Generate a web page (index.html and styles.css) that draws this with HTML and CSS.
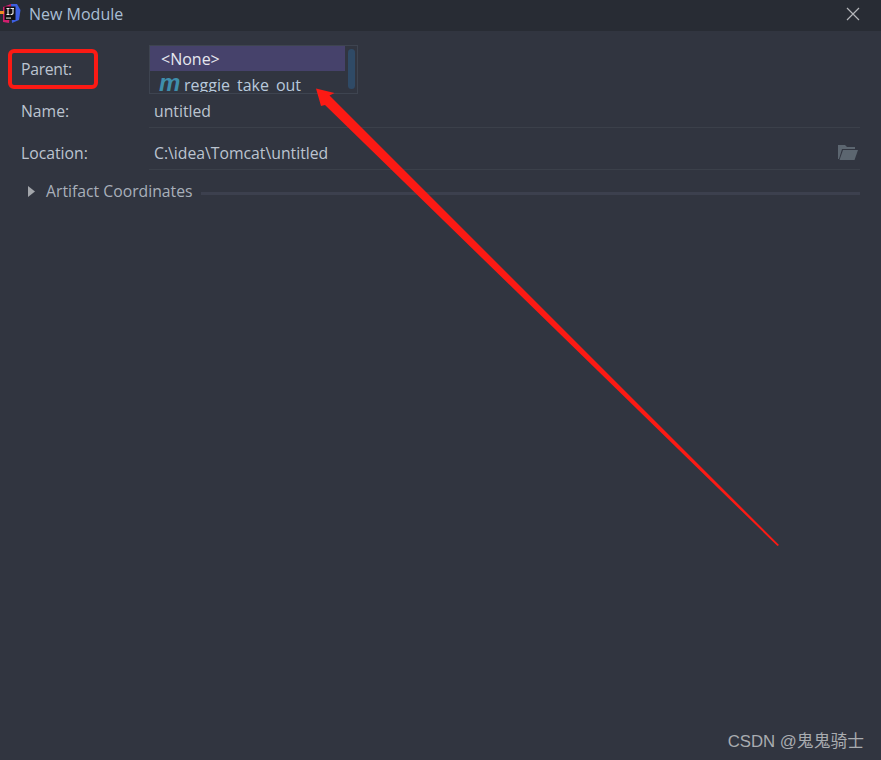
FILE: index.html
```html
<!DOCTYPE html>
<html lang="en">
<head>
<meta charset="utf-8">
<title>New Module</title>
<link rel="stylesheet" href="styles.css">
</head>
<body>
<div class="dialog">
  <header class="titlebar">
    <svg class="app-logo" width="22" height="24" viewBox="0 0 22 24">
      <path d="M11 2 L17 2 L20.5 8 L19 18 L12 21 Z" fill="#3d5fe0"/>
      <path d="M3 5 L11 2 L9 21 L3 20 Z" fill="#d01f6e"/>
      <path d="M0 9 L4 9 L4 12 L0 12 Z" fill="#f08a24"/>
      <rect x="4.5" y="4.5" width="11" height="13.5" fill="#111"/>
      <rect x="6" y="15.5" width="5" height="1.2" fill="#bbb"/>
      <path d="M6.5 6.5 H9.5 M8 6.5 V12.5 M6.5 12.5 H9.5 M10.5 6.5 H14 M13 6.5 V11 Q13 12.5 10.5 12.5" stroke="#eee" stroke-width="1.1" fill="none"/>
    </svg>
    <span class="title">New Module</span>
    <svg class="close" width="14" height="14" viewBox="0 0 14 14">
      <path d="M1 1 L13 13 M13 1 L1 13" stroke="#b4b6ba" stroke-width="1.2" fill="none"/>
    </svg>
  </header>
  <main class="form">
    <div class="row row-parent">
      <label class="label">Parent:</label>
      <div class="dropdown">
        <div class="list">
          <div class="item selected">&lt;None&gt;</div>
          <div class="item item-clipped"><span class="maven">m</span><span>reggie_take_out</span></div>
        </div>
        <div class="track"><div class="thumb"></div></div>
      </div>
    </div>
    <div class="row row-name">
      <label class="label">Name:</label>
      <div class="field">untitled</div>
    </div>
    <div class="row row-location">
      <label class="label">Location:</label>
      <div class="field field-browse">
        <span>C:\idea\Tomcat\untitled</span>
        <svg class="folder" width="20" height="15" viewBox="0 0 20 15">
          <path d="M0 0 H7 L9 2 H17 V4 H4 L1 14 H0 Z" fill="#5c6670"/>
          <path d="M5 5 H20 L16.5 15 H1.5 Z" fill="#5c6670"/>
        </svg>
      </div>
    </div>
    <div class="section">
      <svg class="caret" width="7" height="11" viewBox="0 0 7 11"><path d="M0 0 L7 5.5 L0 11 Z" fill="#a3a6ab"/></svg>
      <span class="section-title">Artifact Coordinates</span>
      <span class="section-line"></span>
    </div>
  </main>
  <div class="watermark">CSDN @鬼鬼骑士</div>
  <div class="callout"></div>
  <svg class="arrow" width="881" height="760" viewBox="0 0 881 760">
    <path d="M316 88.5 L334.5 93 L329.5 95.5 L779 545 L777.5 546 L325 105 L321 106 Z" fill="#fb1a14"/>
  </svg>
</div>
</body>
</html>
```
FILE: styles.css
```css
* { box-sizing: border-box; }
html, body { margin: 0; padding: 0; }
body { width: 881px; height: 760px; overflow: hidden; background: #313540; }
.dialog {
  position: relative;
  width: 881px;
  height: 760px;
  background: #313540;
  color: #bcc4d0;
  font-family: "Open Sans", "Noto Sans", sans-serif;
  font-size: 15.75px;
  line-height: 20px;
}
.titlebar {
  height: 31px;
  background: #282c34;
  display: flex;
  align-items: center;
  padding: 0 21px 3px 0;
}
.app-logo { flex: none; margin-right: 7px; }
.title { flex: 1; color: #a9bfd6; font-size: 16px; }
.close { flex: none; }
.form { padding: 0 21px; }
.row { display: flex; align-items: center; }
.label { width: 128px; flex: none; }
.row-parent { height: 65px; position: relative; align-items: flex-start; padding-top: 28px; }
.row-parent .label { letter-spacing: -0.3px; }
.dropdown {
  position: absolute;
  left: 128px;
  top: 14px;
  width: 209px;
  height: 49px;
  border: 1px solid #3e4450;
  display: flex;
  overflow: hidden;
}
.list { width: 195px; flex: none; }
.item {
  height: 25px;
  display: flex;
  align-items: center;
  padding-left: 11px;
  color: #b8c9dc;
  font-size: 16px;
  white-space: nowrap;
}
.item-clipped {
  height: 20.5px;
  align-items: flex-start;
  padding-top: 4px;
  overflow: hidden;
}
.selected { background: #46426b; color: #e6e8ef; }
.maven {
  color: #3f8eac;
  font-family: "Liberation Sans", sans-serif;
  font-weight: 700;
  font-style: italic;
  font-size: 24px;
  width: 24px;
  margin-left: -2px;
  margin-right: 1px;
  margin-top: -2px;
  line-height: 20px;
}
.track { flex: 1; padding: 3px 2px 4px 3px; }
.thumb { width: 7px; height: 40px; border-radius: 4px; background: #2f4a66; }
.row-name { height: 32px; }
.row-name .label { padding-bottom: 2px; }
.field {
  flex: 1;
  display: flex;
  align-items: center;
  justify-content: space-between;
  padding: 0 2px 0 5px;
  border-bottom: 1px solid #3b404a;
}
.row-name .field { height: 32px; padding-bottom: 2px; }
.row-location { height: 42px; }
.row-location .label { padding-top: 8px; }
.row-location .field { height: 42px; padding-top: 8px; }
.folder { flex: none; margin-top: -1px; }
.section {
  display: flex;
  align-items: center;
  height: 20px;
  margin-top: 11px;
  padding-left: 7px;
}
.caret { flex: none; margin-right: 11px; }
.section-title { flex: none; color: #a8afba; }
.section-line { flex: 1; height: 3px; margin: 4px 0 0 8px; background: #3c404e; }
.watermark {
  position: absolute;
  right: 17px;
  top: 731px;
  color: #a9acb0;
  font-family: "Liberation Sans", "Noto Sans CJK SC", sans-serif;
  font-size: 16.8px;
  line-height: 22px;
  white-space: nowrap;
}
.callout {
  position: absolute;
  left: 8px;
  top: 49px;
  width: 90px;
  height: 40px;
  border: 4px solid #fb1a14;
  border-radius: 6px;
}
.arrow { position: absolute; left: 0; top: 0; pointer-events: none; }
```
